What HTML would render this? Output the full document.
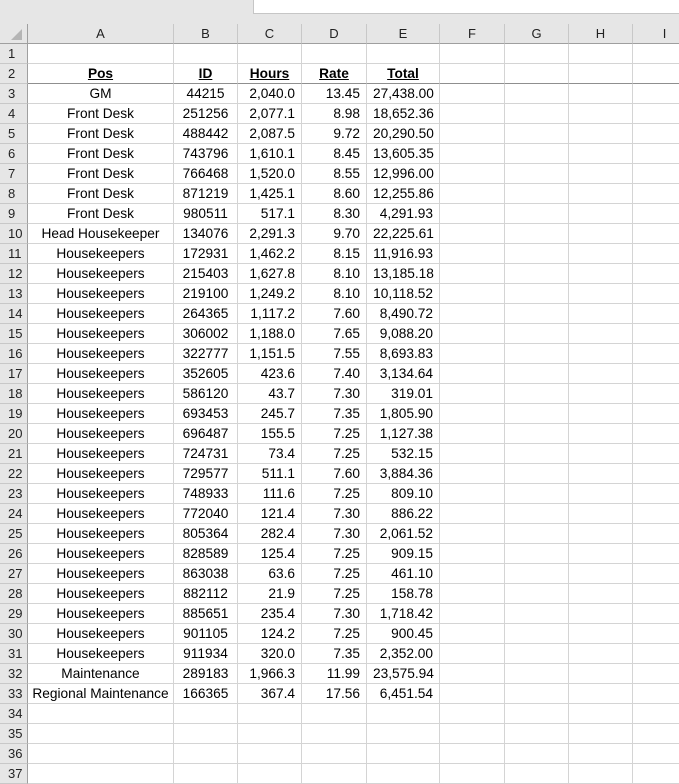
<!DOCTYPE html>
<html><head><meta charset="utf-8"><style>
*{box-sizing:border-box;margin:0;padding:0}
body{width:679px;height:782px;overflow:hidden;background:#fff;font-family:"Liberation Sans",sans-serif;font-size:13.7px;color:#000;position:relative}
#top{position:absolute;left:0;top:0;width:679px;height:24px;background:#e6e6e6}
#box{position:absolute;left:253px;top:0;width:426px;height:14px;background:#fff;border-left:1px solid #c6c6c6;border-bottom:1px solid #c6c6c6}
.r{position:absolute;left:0;height:20px;display:flex;width:700px}
.r div{height:20px;line-height:19px;border-right:1px solid #d4d4d4;border-bottom:1px solid #d4d4d4;white-space:nowrap;overflow:visible;padding:0 6px}
.r div:nth-child(1){width:28px;background:#e6e6e6;border-right:1px solid #9f9f9f;border-bottom:1px solid #c8c8c8;padding:0 0 0 8px;color:#222;font-size:13px}
.r div:nth-child(2){width:146px;text-align:center}
.r div:nth-child(3){width:64px;text-align:center}
.r div:nth-child(4){width:64px;text-align:right}
.r div:nth-child(5){width:65px;text-align:right}
.r div:nth-child(6){width:73px;text-align:right}
.r div:nth-child(7){width:65px}
.r div:nth-child(8){width:64px}
.r div:nth-child(9){width:64px}
.r div:nth-child(10){width:64px}
.h div{background:#e6e6e6;text-align:center!important;border-right:1px solid #c8c8c8;border-bottom:1px solid #9f9f9f;color:#222;font-size:13px}
.h div:nth-child(1){border-bottom:1px solid #9f9f9f}
.b div{border-bottom:1px solid #8f8f8f}
.b div:nth-child(1){border-bottom:1px solid #c8c8c8}
u{font-weight:bold;text-decoration:underline}
.b div:nth-child(4),.b div:nth-child(5),.b div:nth-child(6){text-align:center}
</style></head><body>
<div id="top"><div id="box"></div></div>
<div class="r h" style="top:24px"><div style="padding:0"><svg width="27" height="19"><polygon points="22,5 22,16 11,16" fill="#b5b5b5"/></svg></div><div>A</div><div>B</div><div>C</div><div>D</div><div>E</div><div>F</div><div>G</div><div>H</div><div>I</div></div>
<div class="r" style="top:44px"><div>1</div><div></div><div></div><div></div><div></div><div></div><div></div><div></div><div></div><div></div></div>
<div class="r b" style="top:64px"><div>2</div><div><u>Pos</u></div><div><u>ID</u></div><div><u>Hours</u></div><div><u>Rate</u></div><div><u>Total</u></div><div></div><div></div><div></div><div></div></div>
<div class="r" style="top:84px"><div>3</div><div>GM</div><div>44215</div><div>2,040.0</div><div>13.45</div><div>27,438.00</div><div></div><div></div><div></div><div></div></div>
<div class="r" style="top:104px"><div>4</div><div>Front Desk</div><div>251256</div><div>2,077.1</div><div>8.98</div><div>18,652.36</div><div></div><div></div><div></div><div></div></div>
<div class="r" style="top:124px"><div>5</div><div>Front Desk</div><div>488442</div><div>2,087.5</div><div>9.72</div><div>20,290.50</div><div></div><div></div><div></div><div></div></div>
<div class="r" style="top:144px"><div>6</div><div>Front Desk</div><div>743796</div><div>1,610.1</div><div>8.45</div><div>13,605.35</div><div></div><div></div><div></div><div></div></div>
<div class="r" style="top:164px"><div>7</div><div>Front Desk</div><div>766468</div><div>1,520.0</div><div>8.55</div><div>12,996.00</div><div></div><div></div><div></div><div></div></div>
<div class="r" style="top:184px"><div>8</div><div>Front Desk</div><div>871219</div><div>1,425.1</div><div>8.60</div><div>12,255.86</div><div></div><div></div><div></div><div></div></div>
<div class="r" style="top:204px"><div>9</div><div>Front Desk</div><div>980511</div><div>517.1</div><div>8.30</div><div>4,291.93</div><div></div><div></div><div></div><div></div></div>
<div class="r" style="top:224px"><div>10</div><div>Head Housekeeper</div><div>134076</div><div>2,291.3</div><div>9.70</div><div>22,225.61</div><div></div><div></div><div></div><div></div></div>
<div class="r" style="top:244px"><div>11</div><div>Housekeepers</div><div>172931</div><div>1,462.2</div><div>8.15</div><div>11,916.93</div><div></div><div></div><div></div><div></div></div>
<div class="r" style="top:264px"><div>12</div><div>Housekeepers</div><div>215403</div><div>1,627.8</div><div>8.10</div><div>13,185.18</div><div></div><div></div><div></div><div></div></div>
<div class="r" style="top:284px"><div>13</div><div>Housekeepers</div><div>219100</div><div>1,249.2</div><div>8.10</div><div>10,118.52</div><div></div><div></div><div></div><div></div></div>
<div class="r" style="top:304px"><div>14</div><div>Housekeepers</div><div>264365</div><div>1,117.2</div><div>7.60</div><div>8,490.72</div><div></div><div></div><div></div><div></div></div>
<div class="r" style="top:324px"><div>15</div><div>Housekeepers</div><div>306002</div><div>1,188.0</div><div>7.65</div><div>9,088.20</div><div></div><div></div><div></div><div></div></div>
<div class="r" style="top:344px"><div>16</div><div>Housekeepers</div><div>322777</div><div>1,151.5</div><div>7.55</div><div>8,693.83</div><div></div><div></div><div></div><div></div></div>
<div class="r" style="top:364px"><div>17</div><div>Housekeepers</div><div>352605</div><div>423.6</div><div>7.40</div><div>3,134.64</div><div></div><div></div><div></div><div></div></div>
<div class="r" style="top:384px"><div>18</div><div>Housekeepers</div><div>586120</div><div>43.7</div><div>7.30</div><div>319.01</div><div></div><div></div><div></div><div></div></div>
<div class="r" style="top:404px"><div>19</div><div>Housekeepers</div><div>693453</div><div>245.7</div><div>7.35</div><div>1,805.90</div><div></div><div></div><div></div><div></div></div>
<div class="r" style="top:424px"><div>20</div><div>Housekeepers</div><div>696487</div><div>155.5</div><div>7.25</div><div>1,127.38</div><div></div><div></div><div></div><div></div></div>
<div class="r" style="top:444px"><div>21</div><div>Housekeepers</div><div>724731</div><div>73.4</div><div>7.25</div><div>532.15</div><div></div><div></div><div></div><div></div></div>
<div class="r" style="top:464px"><div>22</div><div>Housekeepers</div><div>729577</div><div>511.1</div><div>7.60</div><div>3,884.36</div><div></div><div></div><div></div><div></div></div>
<div class="r" style="top:484px"><div>23</div><div>Housekeepers</div><div>748933</div><div>111.6</div><div>7.25</div><div>809.10</div><div></div><div></div><div></div><div></div></div>
<div class="r" style="top:504px"><div>24</div><div>Housekeepers</div><div>772040</div><div>121.4</div><div>7.30</div><div>886.22</div><div></div><div></div><div></div><div></div></div>
<div class="r" style="top:524px"><div>25</div><div>Housekeepers</div><div>805364</div><div>282.4</div><div>7.30</div><div>2,061.52</div><div></div><div></div><div></div><div></div></div>
<div class="r" style="top:544px"><div>26</div><div>Housekeepers</div><div>828589</div><div>125.4</div><div>7.25</div><div>909.15</div><div></div><div></div><div></div><div></div></div>
<div class="r" style="top:564px"><div>27</div><div>Housekeepers</div><div>863038</div><div>63.6</div><div>7.25</div><div>461.10</div><div></div><div></div><div></div><div></div></div>
<div class="r" style="top:584px"><div>28</div><div>Housekeepers</div><div>882112</div><div>21.9</div><div>7.25</div><div>158.78</div><div></div><div></div><div></div><div></div></div>
<div class="r" style="top:604px"><div>29</div><div>Housekeepers</div><div>885651</div><div>235.4</div><div>7.30</div><div>1,718.42</div><div></div><div></div><div></div><div></div></div>
<div class="r" style="top:624px"><div>30</div><div>Housekeepers</div><div>901105</div><div>124.2</div><div>7.25</div><div>900.45</div><div></div><div></div><div></div><div></div></div>
<div class="r" style="top:644px"><div>31</div><div>Housekeepers</div><div>911934</div><div>320.0</div><div>7.35</div><div>2,352.00</div><div></div><div></div><div></div><div></div></div>
<div class="r" style="top:664px"><div>32</div><div>Maintenance</div><div>289183</div><div>1,966.3</div><div>11.99</div><div>23,575.94</div><div></div><div></div><div></div><div></div></div>
<div class="r" style="top:684px"><div>33</div><div style="padding:0">Regional Maintenance</div><div>166365</div><div>367.4</div><div>17.56</div><div>6,451.54</div><div></div><div></div><div></div><div></div></div>
<div class="r" style="top:704px"><div>34</div><div></div><div></div><div></div><div></div><div></div><div></div><div></div><div></div><div></div></div>
<div class="r" style="top:724px"><div>35</div><div></div><div></div><div></div><div></div><div></div><div></div><div></div><div></div><div></div></div>
<div class="r" style="top:744px"><div>36</div><div></div><div></div><div></div><div></div><div></div><div></div><div></div><div></div><div></div></div>
<div class="r" style="top:764px"><div>37</div><div></div><div></div><div></div><div></div><div></div><div></div><div></div><div></div><div></div></div>
</body></html>
